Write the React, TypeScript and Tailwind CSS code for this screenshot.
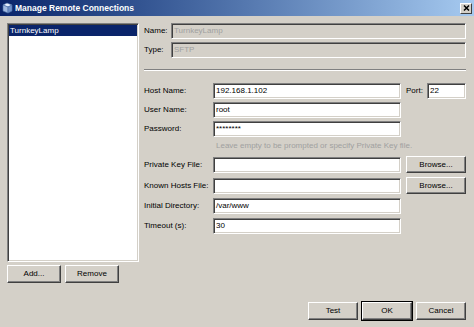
import React from "react";

const fieldCls =
  "h-[16px] bg-white border border-t-[#808080] border-l-[#808080] border-r-white border-b-white shadow-[inset_1px_1px_0_#404040,inset_-1px_-1px_0_#d4d0c8] flex items-center px-[2px] text-[8px] text-black leading-none";
const btnCls =
  "flex items-center justify-center bg-[#d4d0c8] border border-t-white border-l-white border-r-[#404040] border-b-[#404040] shadow-[inset_-1px_-1px_0_#808080] text-[8px] text-black leading-none";

function Field({ className = "", value = "" }: { className?: string; value?: string }) {
  return <div className={`${fieldCls} ${className}`}>{value}</div>;
}

function Row({ label, children, className = "" }: { label: string; children?: React.ReactNode; className?: string }) {
  return (
    <div className={`flex items-center ${className}`}>
      <div className="w-[69px] text-[8px] leading-none text-black">{label}</div>
      {children}
    </div>
  );
}

export default function App() {
  return (
    <div className="w-[474px] h-[327px] bg-[#d4d0c8] flex flex-col overflow-hidden font-['Liberation_Sans',Arial,sans-serif]">
      {/* Title bar */}
      <div className="h-[16px] flex items-center bg-linear-to-r from-[#0a246a] to-[#a6caf0] pl-[2px] pr-[2px]">
        <svg width="11" height="12" viewBox="0 0 11 12">
          <polygon points="1,3 5,1 10,3 6,5" fill="#e8f0ff" stroke="#4a6fa8" strokeWidth="0.6" />
          <polygon points="1,3 6,5 6,11 1,9" fill="#9fb8e0" stroke="#4a6fa8" strokeWidth="0.6" />
          <polygon points="6,5 10,3 10,9 6,11" fill="#6f8fc8" stroke="#4a6fa8" strokeWidth="0.6" />
        </svg>
        <div className="ml-[2px] text-white font-bold text-[8.5px] leading-none">Manage Remote Connections</div>
        <div className="ml-auto w-[12px] h-[11px] bg-[#d4d0c8] border border-t-white border-l-white border-r-[#404040] border-b-[#404040] flex items-center justify-center">
          <svg width="7" height="6" viewBox="0 0 7 6">
            <path d="M1 0.5 L6 5.5 M6 0.5 L1 5.5" stroke="#000" strokeWidth="1.5" />
          </svg>
        </div>
      </div>

      {/* Body */}
      <div className="flex flex-1">
        {/* Left column */}
        <div className="ml-[7px] mt-[7px] flex flex-col">
          <div className="w-[132px] h-[239px] bg-white border border-t-[#808080] border-l-[#808080] border-r-white border-b-white shadow-[inset_1px_1px_0_#404040,inset_-1px_-1px_0_#d4d0c8] p-[1px]">
            <div className="h-[11px] bg-[#0a246a] text-white text-[8px] leading-none flex items-center pl-[1px]">TurnkeyLamp</div>
          </div>
          <div className="flex gap-[4px] mt-[3px]">
            <div className={`${btnCls} w-[54px] h-[18px]`}>Add...</div>
            <div className={`${btnCls} w-[54px] h-[18px]`}>Remove</div>
          </div>
        </div>

        {/* Right column */}
        <div className="ml-[5px] mt-[7px] w-[322px] flex flex-col">
          <div className="flex items-center">
            <div className="w-[27px] text-[8px] leading-none">Name:</div>
            <div className={`${fieldCls} flex-1 !bg-[#d4d0c8] !text-[#a0a0a0]`}>TurnkeyLamp</div>
          </div>
          <div className="flex items-center mt-[3px]">
            <div className="w-[27px] text-[8px] leading-none">Type:</div>
            <div className={`${fieldCls} flex-1 !bg-[#d4d0c8] !text-[#a0a0a0]`}>SFTP</div>
          </div>
          <div className="mt-[11px] h-[2px] border-t border-t-[#808080] border-b border-b-white" />

          <Row label="Host Name:" className="mt-[12px]">
            <Field className="w-[188px]" value="192.168.1.102" />
            <div className="ml-[5px] w-[21px] text-[8px] leading-none">Port:</div>
            <Field className="w-[39px]" value="22" />
          </Row>
          <Row label="User Name:" className="mt-[3px]">
            <Field className="w-[188px]" value="root" />
          </Row>
          <Row label="Password:" className="mt-[3px]">
            <Field className="w-[188px]" value="********" />
          </Row>
          <div className="mt-[4px] h-[10px] pl-[72px] text-[8px] leading-[10px] text-[#a0a0a0]">
            Leave empty to be prompted or specify Private Key file.
          </div>

          <Row label="Private Key File:" className="mt-[5px] h-[17px]">
            <Field className="w-[188px]" />
            <div className={`${btnCls} ml-[5px] w-[60px] h-[17px]`}>Browse...</div>
          </Row>
          <Row label="Known Hosts File:" className="mt-[4px] h-[17px]">
            <Field className="w-[188px]" />
            <div className={`${btnCls} ml-[5px] w-[60px] h-[17px]`}>Browse...</div>
          </Row>
          <Row label="Initial Directory:" className="mt-[4px]">
            <Field className="w-[188px]" value="/var/www" />
          </Row>
          <Row label="Timeout (s):" className="mt-[4px]">
            <Field className="w-[188px]" value="30" />
          </Row>
        </div>
      </div>

      {/* Footer */}
      <div className="flex justify-end gap-[4px] pr-[8px] pb-[7px]">
        <div className={`${btnCls} w-[50px] h-[18px]`}>Test</div>
        <div className={`${btnCls} w-[50px] h-[18px] outline outline-1 outline-black -outline-offset-0`}>OK</div>
        <div className={`${btnCls} w-[50px] h-[18px]`}>Cancel</div>
      </div>
    </div>
  );
}
